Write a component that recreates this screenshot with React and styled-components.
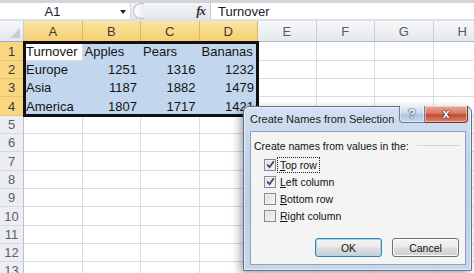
import React from 'react';
import styled, { createGlobalStyle } from 'styled-components';

const GlobalStyle = createGlobalStyle`
  html, body { margin: 0; padding: 0; background: #fff; overflow: hidden; }
  body { font-family: "Liberation Sans", Arial, sans-serif; }
`;

const Screen = styled.div`
  position: relative;
  width: 474px;
  height: 273px;
  overflow: hidden;
  background: #fff;
`;

const FormulaBar = styled.div`
  display: flex;
  height: 21px;
  box-sizing: border-box;
  border-top: 3px solid #d2d6db;
  border-bottom: 2px solid #dde1e6;
  background: #fff;
`;

const NameBox = styled.div`
  width: 130px;
  display: flex;
  align-items: center;
  font-size: 13px;
  color: #1a1a1a;
`;

const NameText = styled.span`
  width: 105px;
  text-align: center;
`;

const DropArrow = styled.span`
  margin-left: 15px;
  width: 0;
  height: 0;
  border-left: 3.5px solid transparent;
  border-right: 3.5px solid transparent;
  border-top: 4px solid #222;
  margin-top: 2px;
`;

const Splitter = styled.div`
  width: 80px;
  display: flex;
  align-items: center;
  justify-content: space-between;
  background: linear-gradient(#f4f5f7, #e3e6ea);
  border-left: 1px solid #d6d9de;
  padding-right: 5px;
  box-sizing: border-box;
`;

const Knob = styled.span`
  width: 10px;
  height: 14px;
  margin-left: 2px;
  border: 1px solid #b9bec5;
  border-right: none;
  border-radius: 8px 0 0 8px;
  background: linear-gradient(90deg, #fff, #e9ebee);
`;

const Fx = styled.span`
  font-family: "Liberation Serif", "Times New Roman", serif;
  font-style: italic;
  font-weight: bold;
  font-size: 13px;
  color: #333;
  letter-spacing: -1px;
`;

const FormulaInput = styled.div`
  flex: 1;
  display: flex;
  align-items: center;
  padding-left: 7px;
  border-left: 1px solid #c3c8cf;
  font-size: 13px;
  color: #1a1a1a;
`;

const SheetWrap = styled.div`
  position: relative;
`;

const Sheet = styled.div`
  display: grid;
  grid-template-columns: 24px repeat(8, 58.5px);
  grid-template-rows: 21.4px repeat(13, 18.33px);
  font-size: 13px;
`;

const Corner = styled.div`
  position: relative;
  box-sizing: border-box;
  background: linear-gradient(#f5f6f8, #e4e7eb);
  border-right: 1px solid #c6cbd1;
  border-bottom: 1px solid #9fb0c4;
  &::after {
    content: "";
    position: absolute;
    right: 3px;
    bottom: 3px;
    border-left: 10px solid transparent;
    border-bottom: 10px solid #c9ced4;
  }
`;

const ColHead = styled.div`
  box-sizing: border-box;
  display: flex;
  align-items: center;
  justify-content: center;
  color: ${p => (p.$active ? '#3a3a3a' : '#555b63')};
  background: ${p =>
    p.$active ? 'linear-gradient(#fbe3a0, #f6cf72)' : 'linear-gradient(#f7f8fa, #e5e8ec)'};
  border-right: 1px solid ${p => (p.$active ? '#e0b85e' : '#c9ced4')};
  border-bottom: 1px solid ${p => (p.$active ? '#d9a94a' : '#a9b7c7')};
`;

const RowHead = styled.div`
  box-sizing: border-box;
  display: flex;
  align-items: center;
  justify-content: center;
  color: ${p => (p.$active ? '#3a3a3a' : '#5a6068')};
  background: ${p => (p.$active ? '#f8d780' : '#eceef1')};
  border-right: 1px solid ${p => (p.$active ? '#d9a94a' : '#b8c1cc')};
  border-bottom: 1px solid ${p => (p.$active ? '#e8c56c' : '#d6dae0')};
`;

const Cell = styled.div`
  box-sizing: border-box;
  display: flex;
  align-items: center;
  justify-content: ${p => (p.$num ? 'flex-end' : 'flex-start')};
  padding: 0 3px 0 2px;
  white-space: nowrap;
  overflow: hidden;
  color: #141414;
  background: ${p => (p.$sel ? '#c2d7ee' : '#fff')};
  border-right: 1px solid ${p => (p.$sel ? '#c2d7ee' : '#dadcdf')};
  border-bottom: 1px solid ${p => (p.$sel ? '#c2d7ee' : '#dadcdf')};
`;

const SelectionFrame = styled.div`
  position: absolute;
  left: 23px;
  top: 20px;
  width: 236px;
  height: 76px;
  box-sizing: border-box;
  border: 3px solid #111;
  pointer-events: none;
`;

const Dialog = styled.div`
  position: absolute;
  left: 243px;
  top: 106px;
  width: 229px;
  height: 165px;
  box-sizing: border-box;
  display: flex;
  flex-direction: column;
  padding: 0 5px 5px 6px;
  border: 1px solid #5d7190;
  border-radius: 6px 6px 0 0;
  background: linear-gradient(#d3e1f1, #c1d3e8 30%, #bccfe5 60%, #c7d7ea);
  box-shadow: -3px 3px 8px rgba(0, 0, 0, 0.35), inset 0 0 0 1px rgba(255, 255, 255, 0.55);
  font-family: "Liberation Sans", Arial, sans-serif;
  font-size: 10.5px;
  color: #111;
`;

const TitleBar = styled.div`
  height: 24px;
  display: flex;
  align-items: flex-start;
`;

const Title = styled.span`
  flex: 1;
  padding-top: 6px;
  font-size: 11px;
  color: #1b1b1b;
  white-space: nowrap;
`;

const CaptionButton = styled.span`
  box-sizing: border-box;
  display: flex;
  align-items: center;
  justify-content: center;
  height: 17px;
  width: ${p => (p.$close ? '43px' : '26px')};
  border: 1px solid ${p => (p.$close ? '#7a3326' : '#6b7e98')};
  border-top: none;
  border-radius: ${p => (p.$close ? '0 0 4px 0' : '0 0 0 4px')};
  ${p => (p.$close ? 'border-left: none;' : '')}
  background: ${p =>
    p.$close
      ? 'linear-gradient(#e9a999, #d77a66 45%, #c64a34 55%, #d9826c)'
      : 'linear-gradient(#e4edf8, #c9d9ec 45%, #aec4de 55%, #c5d7ec)'};
  box-shadow: inset 0 0 0 1px rgba(255, 255, 255, 0.45);
  color: #fff;
  font-weight: bold;
  font-size: 12px;
  text-shadow: 0 0 2px #223, 0 0 1px #223;
`;

const CaptionGroup = styled.div`
  display: flex;
  margin-top: -1px;
  margin-right: -2px;
`;

const Client = styled.div`
  flex: 1;
  display: flex;
  flex-direction: column;
  background: #f4f4f4;
  border: 1px solid #8ea3bf;
  padding: 6px 6px 0 3px;
`;

const GroupLabel = styled.div`
  display: flex;
  align-items: center;
  gap: 8px;
  height: 15px;
  white-space: nowrap;
  &::after {
    content: "";
    flex: 1;
    height: 1px;
    background: #d5d5d5;
    margin-right: -1px;
  }
`;

const OptionList = styled.div`
  display: flex;
  flex-direction: column;
  margin: 3px 0 0 10px;
`;

const Option = styled.label`
  display: flex;
  align-items: center;
  height: 17px;
`;

const Box = styled.span`
  box-sizing: border-box;
  width: 12px;
  height: 12px;
  display: flex;
  align-items: center;
  justify-content: center;
  border: 1px solid #8a8a8a;
  background: linear-gradient(135deg, #dcdcdc, #f8f8f8);
  box-shadow: inset 0 0 0 1px #f2f2f2;
`;

const OptionText = styled.span`
  margin-left: 1px;
  padding: 1px 2px;
  border: 1px dotted ${p => (p.$focus ? '#222' : 'transparent')};
`;

const Key = styled.span`
  text-decoration: underline;
`;

const ButtonRow = styled.div`
  display: flex;
  justify-content: flex-end;
  gap: 10px;
  margin-top: 14px;
`;

const Button = styled.span`
  box-sizing: border-box;
  width: 67px;
  height: 19px;
  display: flex;
  align-items: center;
  justify-content: center;
  border-radius: 3px;
  border: 1px solid ${p => (p.$default ? '#3c7fb1' : '#707070')};
  background: linear-gradient(#f4f4f4, #ebebeb 48%, #dddddd 52%, #cfcfcf);
  box-shadow: inset 0 0 0 1px ${p => (p.$default ? '#9fdcf5' : '#fbfbfb')};
  color: #111;
`;

const Check = () => (
  <svg width="9" height="9" viewBox="0 0 9 9">
    <path d="M1.2 4.6 L3.6 7.2 L7.8 1.3" fill="none" stroke="#33477a" strokeWidth="1.8" />
  </svg>
);

const cols = ['A', 'B', 'C', 'D', 'E', 'F', 'G', 'H'];
const data = [
  ['Turnover', 'Apples', 'Pears', 'Bananas'],
  ['Europe', 1251, 1316, 1232],
  ['Asia', 1187, 1882, 1479],
  ['America', 1807, 1717, 1421],
];

export default function App() {
  const rows = [];
  for (let r = 1; r <= 13; r++) {
    const active = r <= 4;
    rows.push(<RowHead key={`h${r}`} $active={active}>{r}</RowHead>);
    cols.forEach((c, ci) => {
      const v = active && ci < 4 ? data[r - 1][ci] : '';
      const sel = active && ci < 4 && !(r === 1 && ci === 0);
      rows.push(
        <Cell key={`${c}${r}`} $sel={sel} $num={typeof v === 'number'}>
          {v}
        </Cell>
      );
    });
  }

  return (
    <Screen>
      <GlobalStyle />
      <FormulaBar>
        <NameBox>
          <NameText>A1</NameText>
          <DropArrow />
        </NameBox>
        <Splitter>
          <Knob />
          <Fx>fx</Fx>
        </Splitter>
        <FormulaInput>Turnover</FormulaInput>
      </FormulaBar>
      <SheetWrap>
        <Sheet>
          <Corner />
          {cols.map((c, i) => (
            <ColHead key={c} $active={i < 4}>{c}</ColHead>
          ))}
          {rows}
        </Sheet>
        <SelectionFrame />
      </SheetWrap>
      <Dialog>
        <TitleBar>
          <Title>Create Names from Selection</Title>
          <CaptionGroup>
            <CaptionButton>?</CaptionButton>
            <CaptionButton $close>x</CaptionButton>
          </CaptionGroup>
        </TitleBar>
        <Client>
          <GroupLabel>Create names from values in the:</GroupLabel>
          <OptionList>
            <Option>
              <Box><Check /></Box>
              <OptionText $focus><Key>T</Key>op row</OptionText>
            </Option>
            <Option>
              <Box><Check /></Box>
              <OptionText><Key>L</Key>eft column</OptionText>
            </Option>
            <Option>
              <Box />
              <OptionText><Key>B</Key>ottom row</OptionText>
            </Option>
            <Option>
              <Box />
              <OptionText><Key>R</Key>ight column</OptionText>
            </Option>
          </OptionList>
          <ButtonRow>
            <Button $default>OK</Button>
            <Button>Cancel</Button>
          </ButtonRow>
        </Client>
      </Dialog>
    </Screen>
  );
}
